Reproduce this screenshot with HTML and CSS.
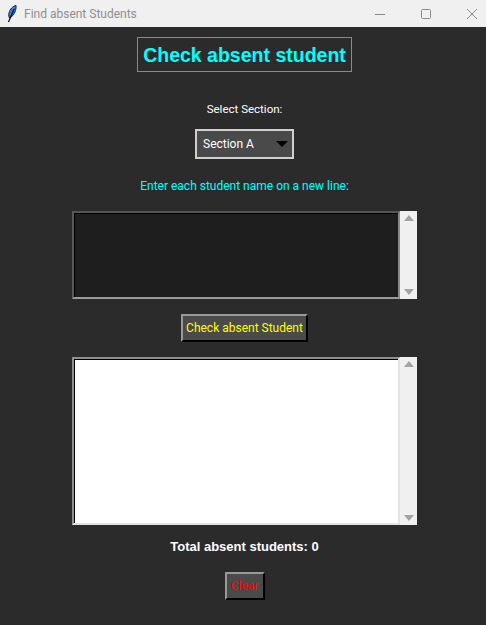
FILE: index.html
```html
<!DOCTYPE html>
<html lang="en">
<head>
    <meta charset="UTF-8">
    <title>Find absent Students</title>
    <link rel="stylesheet" href="styles.css">
</head>
<body>
    <div class="titlebar">
        <svg class="feather" width="12" height="20" viewBox="0 0 12 20">
            <path d="M10 1.500 C7 2 4 5 3 9 C2.500 11.500 2.800 13 3.500 14 C6 13 8.500 10 9.500 6.500 C10 4.500 10.300 3 10 1.500 Z" fill="#3b86d8" stroke="#0f2140" stroke-width="1"/>
            <path d="M8 5 L2.500 18" stroke="#05070f" stroke-width="1.200" fill="none"/>
        </svg>
        <span class="window-title">Find absent Students</span>
        <div class="window-controls">
            <svg width="12" height="12" viewBox="0 0 12 12"><path d="M1 6.500 H11" stroke="#8a8a8a" fill="none"/></svg>
            <svg width="12" height="12" viewBox="0 0 12 12"><rect x="1.500" y="1.500" width="9" height="9" rx="1" stroke="#8a8a8a" fill="none"/></svg>
            <svg width="12" height="12" viewBox="0 0 12 12"><path d="M1 1 L11 11 M11 1 L1 11" stroke="#8a8a8a" fill="none"/></svg>
        </div>
    </div>

    <div class="app">
        <h1 class="heading">Check absent student</h1>
        <div class="section-label">Select Section:</div>
        <div class="dropdown">
            <span>Section A</span>
            <span class="dropdown-arrow"></span>
        </div>
        <div class="hint">Enter each student name on a new line:</div>

        <div class="text-row input-row">
            <div class="text-box input-box"></div>
            <div class="scrollbar">
                <span class="arrow-up"></span>
                <span class="arrow-down"></span>
            </div>
        </div>

        <button class="btn check-btn">Check absent Student</button>

        <div class="text-row">
            <div class="text-box output-box"></div>
            <div class="scrollbar">
                <span class="arrow-up"></span>
                <span class="arrow-down"></span>
            </div>
        </div>

        <div class="total">Total absent students: 0</div>
        <button class="btn clear-btn">Clear</button>
    </div>
</body>
</html>
```

FILE: styles.css
```css
body{
    margin: 0;
    background-color: #2b2b2b;
    font-family: Roboto, "Open Sans", sans-serif;
    font-size: 12px;
}
.titlebar{
    display: flex;
    align-items: center;
    height: 27px;
    padding-left: 6px;
    background-color: #f0f0f0;
}
.feather{
    flex: none;
}
.window-title{
    margin-left: 6px;
    color: #8f8f8f;
}
.window-controls{
    display: flex;
    gap: 34px;
    margin-left: auto;
    padding-right: 8px;
}
.app{
    display: flex;
    flex-direction: column;
    align-items: center;
    padding-top: 10px;
    padding-left: 3px;
}
.heading{
    box-sizing: border-box;
    width: 215px;
    height: 35px;
    margin: 0;
    border: 1px solid #8a8a8a;
    color: #00ffff;
    font-family: "Liberation Sans", sans-serif;
    font-size: 19.500px;
    font-weight: bold;
    line-height: 35px;
    text-align: center;
}
.section-label{
    height: 17px;
    margin-top: 29px;
    color: #fff;
    font-size: 11.500px;
    line-height: 17px;
}
.dropdown{
    box-sizing: border-box;
    display: flex;
    align-items: center;
    justify-content: space-between;
    width: 99px;
    height: 30px;
    margin-top: 11px;
    padding: 0 4px 0 6px;
    border: 2px solid #d0d0d0;
    background-color: #4a4a4a;
    color: #fff;
}
.dropdown-arrow{
    width: 0;
    height: 0;
    border-left: 6px solid transparent;
    border-right: 6px solid transparent;
    border-top: 6px solid #000;
}
.hint{
    height: 17px;
    margin-top: 19px;
    color: #00ffff;
    line-height: 17px;
}
.text-row{
    display: flex;
    width: 345px;
}
.input-row{
    margin-top: 16px;
}
.text-box{
    box-sizing: border-box;
    flex: 1;
    border-style: solid;
    border-width: 2px;
}
.input-box{
    height: 88px;
    border-color: #555 #8a8a8a #9a9a9a #5a5a5a;
    background-color: #1e1e1e;
    box-shadow: inset 1px 1px 0 #000;
}
.output-box{
    height: 168px;
    border-color: #8f8f8f #e3e3e3 #e3e3e3 #8f8f8f;
    background-color: #fff;
    box-shadow: inset 1px 1px 0 #000;
}
.scrollbar{
    display: flex;
    flex-direction: column;
    align-items: center;
    justify-content: space-between;
    width: 17px;
    padding: 4px 0;
    box-sizing: border-box;
    background-color: #f0f0f0;
}
.arrow-up,
.arrow-down{
    width: 0;
    height: 0;
    border-left: 5px solid transparent;
    border-right: 5px solid transparent;
}
.arrow-up{
    border-bottom: 6px solid #a3a3a3;
}
.arrow-down{
    border-top: 6px solid #a3a3a3;
}
.btn{
    box-sizing: border-box;
    padding: 0;
    border-style: solid;
    border-width: 2px;
    border-color: #999 #000 #000 #999;
    background-color: #4a4a4a;
    font-family: Roboto, "Open Sans", sans-serif;
    font-size: 12px;
}
.check-btn{
    width: 127px;
    height: 28px;
    margin: 15px 0;
    color: #ffff00;
}
.total{
    height: 17px;
    margin-top: 13px;
    color: #fff;
    font-family: "Liberation Sans", sans-serif;
    font-size: 13px;
    font-weight: bold;
    line-height: 17px;
}
.clear-btn{
    width: 40px;
    height: 28px;
    margin-top: 17px;
    color: #ff0000;
}
```
